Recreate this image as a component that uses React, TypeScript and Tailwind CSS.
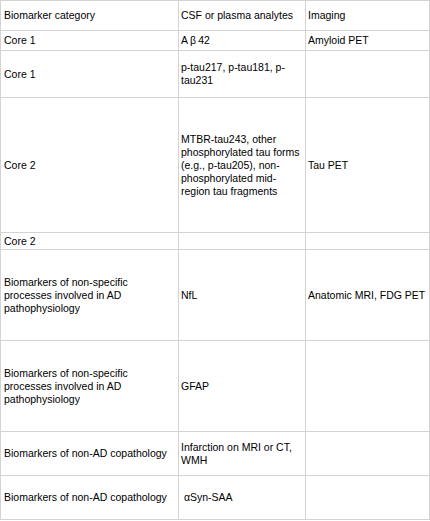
const rows: { h: string; cat: string; csf: string; img: string }[] = [
  { h: 'h-[30px]', cat: 'Biomarker category', csf: 'CSF or plasma analytes', img: 'Imaging' },
  { h: 'h-[20px]', cat: 'Core 1', csf: 'A\u2009β\u200942', img: 'Amyloid PET' },
  { h: 'h-[47px]', cat: 'Core 1', csf: 'p-tau217, p-tau181, p-\ntau231', img: '' },
  {
    h: 'h-[135px]',
    cat: 'Core 2',
    csf: 'MTBR-tau243, other\nphosphorylated tau forms\n(e.g., p-tau205), non-\nphosphorylated mid-\nregion tau fragments',
    img: 'Tau PET',
  },
  { h: 'h-[17px]', cat: 'Core 2', csf: '', img: '' },
  {
    h: 'h-[91px]',
    cat: 'Biomarkers of non-specific\nprocesses involved in AD\npathophysiology',
    csf: 'NfL',
    img: 'Anatomic MRI, FDG PET',
  },
  {
    h: 'h-[91px]',
    cat: 'Biomarkers of non-specific\nprocesses involved in AD\npathophysiology',
    csf: 'GFAP',
    img: '',
  },
  { h: 'h-[44px]', cat: 'Biomarkers of non-AD copathology', csf: 'Infarction on MRI or CT,\nWMH', img: '' },
  { h: 'h-[44px]', cat: 'Biomarkers of non-AD copathology', csf: '\u00a0αSyn-SAA', img: '' },
]

export default function App() {
  return (
    <div className="bg-white w-[430px] h-[521px] font-['Liberation_Sans','Noto_Sans_CJK_JP',sans-serif] text-[10.5px] leading-[13px] text-black">
      <table className="table-fixed border-collapse w-[429px]">
        <colgroup>
          <col className="w-[178px]" />
          <col className="w-[127px]" />
          <col className="w-[124px]" />
        </colgroup>
        <tbody>
          {rows.map((r, i) => (
            <tr key={i} className={r.h}>
              <td className="border border-[#d3d3d3] px-[3px] py-0 align-middle whitespace-pre-line">{r.cat}</td>
              <td className="border border-[#d3d3d3] px-[2px] py-0 align-middle whitespace-pre-line">{r.csf}</td>
              <td className="border border-[#d3d3d3] px-[2px] py-0 align-middle whitespace-pre-line">{r.img}</td>
            </tr>
          ))}
        </tbody>
      </table>
    </div>
  )
}
